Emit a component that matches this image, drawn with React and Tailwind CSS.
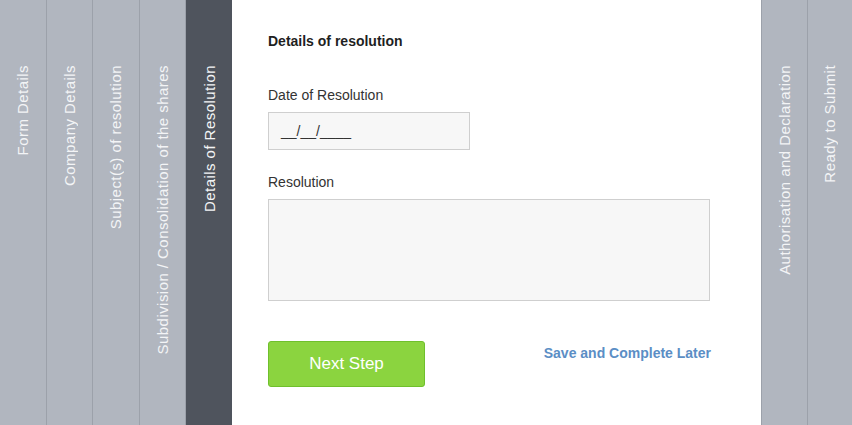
import React from 'react'

const leftSteps = [
  { label: 'Form Details' },
  { label: 'Company Details' },
  { label: 'Subject(s) of resolution' },
  { label: 'Subdivision / Consolidation of the shares' },
  { label: 'Details of Resolution', active: true },
]

const rightSteps = ['Authorisation and Declaration', 'Ready to Submit']

function StepTab({ label, active, side }) {
  return (
    <div
      className={
        'flex justify-center items-start pt-[65px] h-full shrink-0 ' +
        (active
          ? 'bg-[#4f545d] w-[46px]'
          : side === 'left'
            ? 'bg-[#b1b6bf] w-[46.5px] border-r border-[#9ca1aa]'
            : 'bg-[#b1b6bf] w-[45.5px] border-l border-[#9ca1aa]')
      }
    >
      <span className="[writing-mode:vertical-rl] rotate-180 text-[15px] leading-[17px] tracking-[0.45px] text-[#f3f4f6] whitespace-nowrap">
        {label}
      </span>
    </div>
  )
}

export default function App() {
  return (
    <div className="flex h-[425px] w-[852px] bg-white font-['Liberation_Sans',Arial,sans-serif] overflow-hidden">
      {leftSteps.map((s) => (
        <StepTab key={s.label} label={s.label} active={s.active} side="left" />
      ))}

      {/* Form */}
      <div className="flex-1 pl-[36px] pt-[33px]">
        <div className="w-[443px]">
          <h2 className="text-[14px] leading-[16px] font-bold text-[#1f1f1f]">Details of resolution</h2>

          <label className="block mt-[38px] text-[14px] leading-[16px] text-[#333]">Date of Resolution</label>
          <div className="mt-[9px] w-[202px] h-[38px] bg-[#f7f7f7] border border-[#cfcfcf] flex items-center pl-[12px] text-[14px] text-[#333]">
            __/__/____
          </div>

          <label className="block mt-[24px] text-[14px] leading-[16px] text-[#333]">Resolution</label>
          <div className="mt-[9px] w-[442px] h-[102px] bg-[#f7f7f7] border border-[#cfcfcf]" />

          <div className="mt-[40px] flex justify-between items-start">
            <button className="w-[157px] h-[46px] rounded-[3px] bg-[#8bd43f] border border-[#6fc02c] text-white text-[17px]">
              Next Step
            </button>
            <a className="mt-[4px] text-[14px] leading-[16px] font-bold text-[#5b8ec5]">Save and Complete Later</a>
          </div>
        </div>
      </div>

      {rightSteps.map((s) => (
        <StepTab key={s} label={s} side="right" />
      ))}
    </div>
  )
}
